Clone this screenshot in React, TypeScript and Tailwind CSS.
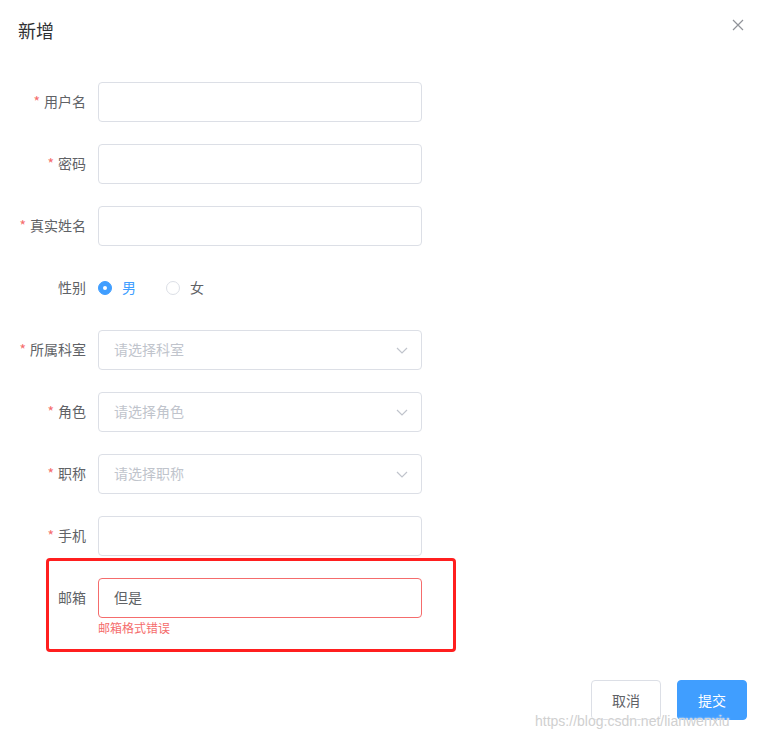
import React from "react";

const Star = () => <span className="text-[#f56c6c] mr-1">*</span>;

function Label({ text, req }: { text: string; req?: boolean }) {
  return (
    <div className="w-[80px] shrink-0 text-right pr-3 pb-[2px] text-sm text-[#606266] leading-[38px]">
      {req && <Star />}
      {text}
    </div>
  );
}

function Input() {
  return <div className="w-[324px] h-10 border border-[#dcdfe6] rounded bg-white" />;
}

function Select({ ph }: { ph: string }) {
  return (
    <div className="w-[324px] h-10 border border-[#dcdfe6] rounded bg-white flex items-center justify-between pl-[15px] pr-[12px]">
      <span className="text-sm text-[#c0c4cc] leading-[36px] pb-[2px]">{ph}</span>
      <svg width="14" height="14" viewBox="0 0 14 14" fill="none">
        <path d="M2 5l5 5 5-5" stroke="#c0c4cc" strokeWidth="1.2" />
      </svg>
    </div>
  );
}

function Row({ children }: { children: React.ReactNode }) {
  return <div className="flex items-center h-10">{children}</div>;
}

export default function App() {
  return (
    <div
      className="w-[764px] h-[739px] bg-white relative overflow-hidden flex flex-col"
      style={{ fontFamily: '"Noto Sans CJK SC", "Noto Sans", sans-serif' }}
    >
      <div className="flex justify-between items-start pt-[18px] pl-[18px] pr-[20px] h-[44px]">
        <div className="text-[18px] leading-6 text-[#303133]">新增</div>
        <svg width="12" height="12" viewBox="0 0 12 12" className="mt-[1px]">
          <path d="M1 1l10 10M11 1L1 11" stroke="#909399" strokeWidth="1.2" />
        </svg>
      </div>

      <div className="pl-[18px] pt-[38px] flex flex-col gap-[22px]">
        <Row>
          <Label text="用户名" req />
          <Input />
        </Row>
        <Row>
          <Label text="密码" req />
          <Input />
        </Row>
        <Row>
          <Label text="真实姓名" req />
          <Input />
        </Row>
        <Row>
          <Label text="性别" />
          <div className="flex items-center text-sm leading-[20px]">
            <span className="w-[14px] h-[14px] rounded-full bg-[#409eff] border border-[#409eff] flex items-center justify-center">
              <span className="w-1 h-1 rounded-full bg-white" />
            </span>
            <span className="ml-[10px] pb-[2px] text-[#409eff]">男</span>
            <span className="ml-[30px] w-[14px] h-[14px] rounded-full border border-[#dcdfe6] bg-white" />
            <span className="ml-[10px] pb-[2px] text-[#606266]">女</span>
          </div>
        </Row>
        <Row>
          <Label text="所属科室" req />
          <Select ph="请选择科室" />
        </Row>
        <Row>
          <Label text="角色" req />
          <Select ph="请选择角色" />
        </Row>
        <Row>
          <Label text="职称" req />
          <Select ph="请选择职称" />
        </Row>
        <Row>
          <Label text="手机" req />
          <Input />
        </Row>
        <div className="flex items-start">
          <Label text="邮箱" />
          <div className="flex flex-col">
            <div className="w-[324px] h-10 border border-[#f56c6c] rounded bg-white flex items-center pl-[15px] text-sm text-[#606266]">
              <span className="leading-[36px] pb-[2px]">但是</span>
            </div>
            <div className="pt-1 text-xs leading-none text-[#f56c6c]">邮箱格式错误</div>
          </div>
        </div>
      </div>

      <div className="flex justify-end gap-4 pr-[17px] pt-[46px]">
        <button className="w-[70px] h-10 border border-[#dcdfe6] rounded bg-white text-sm text-[#606266]">取消</button>
        <button className="w-[70px] h-10 border border-[#409eff] rounded bg-[#409eff] text-sm text-white">提交</button>
      </div>

      <div className="absolute left-[46px] top-[558px] w-[410px] h-[94px] border-[3px] border-[#ff1f1f] rounded-sm" />

      <div
        className="absolute left-[535px] top-[711px] text-[14px] text-[#d0d0d0]"
        style={{ fontFamily: '"Liberation Sans", Arial, sans-serif', textShadow: "0 0 2px #fff, 0 0 1px #fff" }}
      >
        https://blog.csdn.net/lianwenxiu
      </div>
    </div>
  );
}
